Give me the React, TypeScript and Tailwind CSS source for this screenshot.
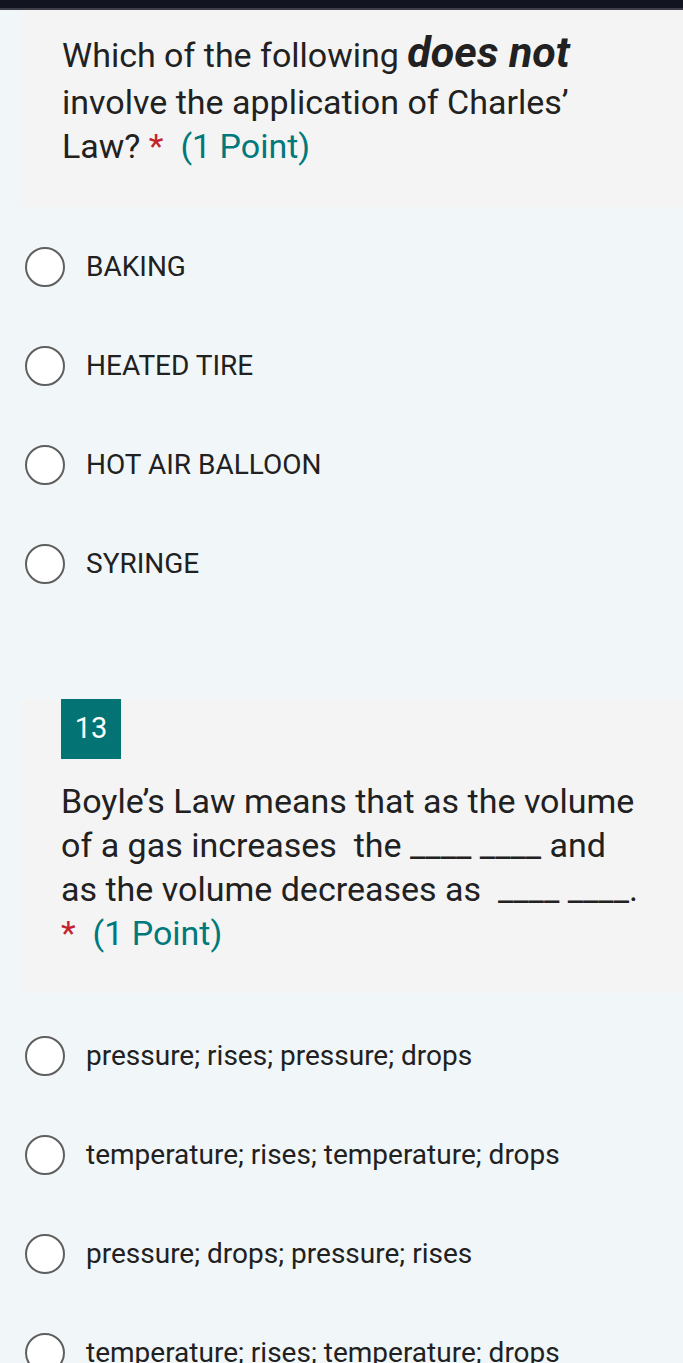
import React from 'react';

function Radio() {
  return <span className="block h-[40px] w-[40px] shrink-0 rounded-full border-2 border-[#5f5f5f] bg-white" />;
}

function Options({ items }: { items: string[] }) {
  return (
    <div className="pl-[25px]">
      {items.map((o, i) => (
        <div key={i} className="flex h-[99px] items-center gap-[21px]">
          <Radio />
          <span className="whitespace-nowrap text-[28px] leading-none text-[#212121]">{o}</span>
        </div>
      ))}
    </div>
  );
}

const Star = () => <span className="text-[#c5232b]">*</span>;
const Points = () => <span className="text-[#00797c]">&nbsp; (1 Point)</span>;

export default function App() {
  return (
    <div className="h-[1363px] overflow-hidden bg-[#f1f6f8]" style={{ fontFamily: 'Roboto, "Noto Sans", sans-serif' }}>
      <div className="h-[8px] bg-[#12151f]" />
      <div className="h-[2px] bg-[#3d3e48]" />

      {/* question 12 */}
      <section className="ml-[22px] bg-[#f4f4f4] pb-[39px] pl-[40px] pt-[20px]">
        <div className="whitespace-nowrap text-[34px] text-[#212121]">
          <div className="h-[50px] leading-[50px]">
            Which of the following <b className="text-[43px] font-bold italic leading-none">does not</b>
          </div>
          <div className="h-[44px] leading-[44px]">involve the application of Charles’</div>
          <div className="h-[44px] leading-[44px]">
            Law? <Star />
            <Points />
          </div>
        </div>
      </section>
      <div className="pt-[10px]">
        <Options items={['BAKING', 'HEATED TIRE', 'HOT AIR BALLOON', 'SYRINGE']} />
      </div>

      {/* question 13 */}
      <section className="ml-[22px] mt-[86px] bg-[#f4f4f4] pb-[38px] pl-[39px]">
        <div className="flex h-[60px] w-[60px] items-center justify-center bg-[#037473] text-[29px] text-white">13</div>
        <div className="whitespace-nowrap pt-[20px] text-[34px] leading-[44px] text-[#212121]">
          <div>Boyle’s Law means that as the volume</div>
          <div>of a gas increases&nbsp; the ____ ____ and</div>
          <div>as the volume decreases as&nbsp; ____ ____.</div>
          <div>
            <Star />
            <Points />
          </div>
        </div>
      </section>
      <div className="pt-[13px]">
        <Options
          items={[
            'pressure; rises; pressure; drops',
            'temperature; rises; temperature; drops',
            'pressure; drops; pressure; rises',
            'temperature; rises; temperature; drops',
          ]}
        />
      </div>
    </div>
  );
}
